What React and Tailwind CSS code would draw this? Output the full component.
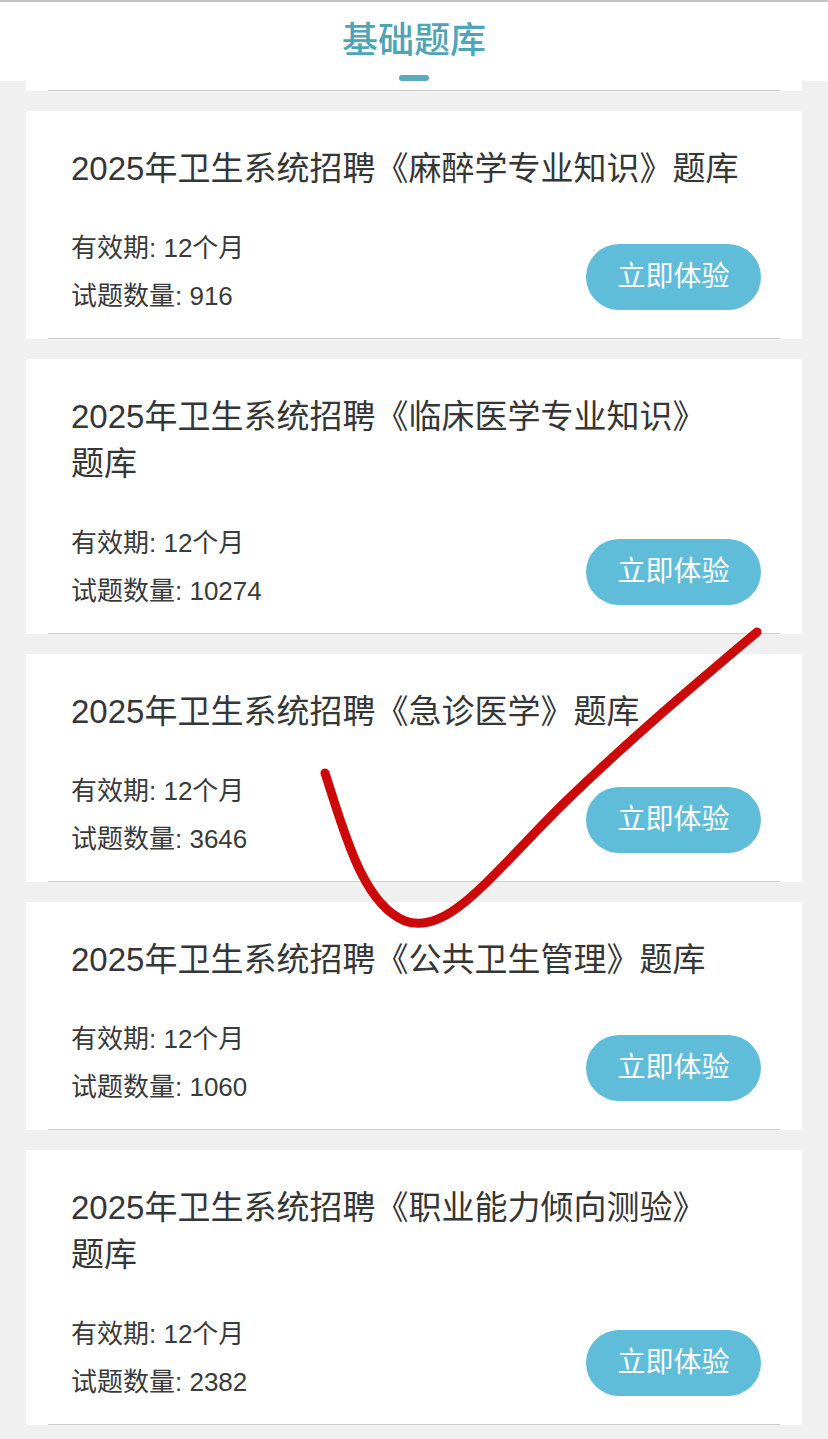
import React from "react";

const items = [
  { head: "2025年卫生系统招聘《麻醉学专业知识》", count: "916" },
  { head: "2025年卫生系统招聘《临床医学专业知识》", count: "10274" },
  { head: "2025年卫生系统招聘《急诊医学》", count: "3646" },
  { head: "2025年卫生系统招聘《公共卫生管理》", count: "1060" },
  { head: "2025年卫生系统招聘《职业能力倾向测验》", count: "2382" },
];

function Card({ head, count }) {
  return (
    <div className="mt-[20px] bg-white flex flex-col">
      <div className="pt-[34px] pl-[45px] pr-[41px] pb-[18px]">
        <div className="text-[33px] leading-[47px] text-[#363636]">
          {head}
          <span className="whitespace-nowrap">题库</span>
        </div>
        <div className="mt-[32px] flex flex-row justify-between items-end">
          <div className="flex flex-col text-[26px] leading-[48px] text-[#3a3a3a]">
            <div>有效期: 12个月</div>
            <div>试题数量: {count}</div>
          </div>
          <button className="mb-[10px] w-[175px] h-[66px] rounded-full bg-[#5fbdd9] text-white text-[28px] leading-none flex items-center justify-center">
            立即体验
          </button>
        </div>
      </div>
      <div className="mx-[22px] h-px bg-[#cfcfcf]" />
    </div>
  );
}

export default function App() {
  return (
    <div
      className="relative min-h-screen w-[828px] bg-[#f0f0f0]"
      style={{ fontFamily: '"Liberation Sans", "Noto Sans CJK SC", sans-serif' }}
    >
      <div className="bg-white border-t-2 border-[#c4c4c4] h-[81px] flex flex-col items-center">
        <div className="mt-[17px] text-[36px] leading-[44px] font-medium text-[#4fa5b6]">基础题库</div>
        <div className="mt-auto w-[30px] h-[6px] rounded-full bg-[#5aabbb]" />
      </div>
      <div className="px-[26px] pb-[16px]">
        <div className="bg-white h-[10px] flex flex-col justify-end">
          <div className="mx-[22px] h-px bg-[#cfcfcf]" />
        </div>
        {items.map((it) => (
          <Card key={it.head} {...it} />
        ))}
      </div>
      <svg
        className="absolute left-0 top-0 pointer-events-none"
        width="828"
        height="1439"
        viewBox="0 0 828 1439"
      >
        <path
          d="M325 773 C 343 828 362 904 405 921 C 447 936 487 880 562 805 C 632 737 700 680 757 632"
          fill="none"
          stroke="#cc0808"
          strokeWidth="9"
          strokeLinecap="round"
          strokeLinejoin="round"
        />
      </svg>
    </div>
  );
}
